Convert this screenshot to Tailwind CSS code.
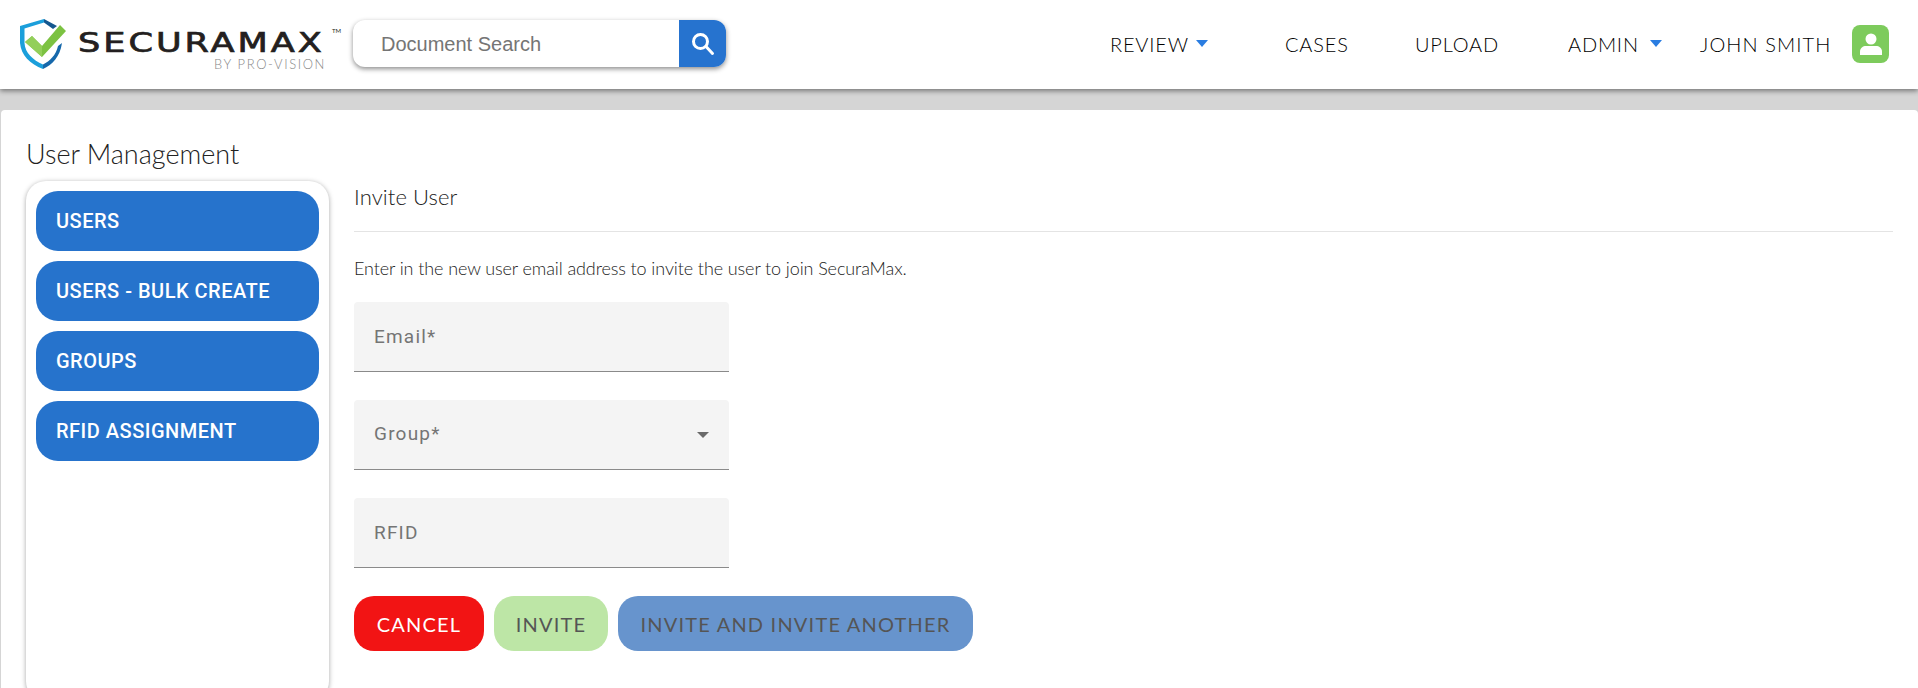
<!DOCTYPE html>
<html lang="en">
<head>
  <meta charset="UTF-8">
  <title>User Management - SecuraMax</title>
  <script src="https://cdn.jsdelivr.net/npm/@tailwindcss/browser@4"></script>
</head>
<body class="h-[688px] overflow-hidden bg-[#d5d5d5] font-['Lato',sans-serif] text-[#222]">
  <!-- Navigation -->
  <nav class="relative z-10 flex h-[89px] items-center bg-white pb-[2px] pl-[20px] pr-[29px] shadow-[0_2px_5px_rgba(0,0,0,0.45)]">
    <div class="flex h-[50px] w-[333px] shrink-0 items-center">
      <svg class="h-[50px] w-[46px] shrink-0" viewBox="0 0 46 50">
        <path d="M0 7 L24 0 L24 3.5 L4.5 9.5 L4.5 24 C5 34 13 41 23 45.5 L23 50 C10 45 1 36 0 24 Z" fill="#1b9fdb"/>
        <path d="M24 0 L37 7 L33 10 L24 3.5 Z" fill="#14578f"/>
        <path d="M23 50 C32 46 40 38 42 24 L38 27 C36 36 30 42 23 45.5 Z" fill="#1668ab"/>
        <path d="M5 23 L12 17 L22 27 L40 6 L46 12 L22 38 Z" fill="#7cc242"/>
        <path d="M22 27 L22 38 L5 23 L12 17 Z" fill="#93cf5a"/>
      </svg>
      <div class="relative ml-[12px] flex flex-col pt-[13px]">
        <div class="w-[178px] origin-left scale-x-135 whitespace-nowrap text-[26px] leading-[24px] tracking-[2.2px] text-[#231f20] [-webkit-text-stroke:0.7px_#231f20] font-['DejaVu_Sans',sans-serif]">SECURAMAX</div>
        <span class="absolute left-[254px] top-[9px] text-[6px] leading-[8px] text-[#231f20]">TM</span>
        <div class="mt-[3px] w-[248px] text-right text-[13px] leading-[12px] font-light tracking-[1.6px] text-[#888]">BY PRO-VISION</div>
      </div>
    </div>
    <div class="flex h-[47px] w-[373px] overflow-hidden rounded-[12px] bg-white shadow-[0_2px_5px_rgba(0,0,0,0.45)]">
      <input placeholder="Document Search" class="min-w-0 flex-1 pl-[28px] font-['Liberation_Sans',sans-serif] text-[20px] outline-none placeholder:text-[#757575]">
      <div class="flex w-[47px] items-center justify-center bg-[#2673cf]">
        <svg class="h-[24px] w-[24px]" viewBox="0 0 24 24" fill="none" stroke="white" stroke-width="3"><circle cx="9.5" cy="9.5" r="7"/><path d="M15 14.5 L21.5 21.5" stroke-linecap="round"/></svg>
      </div>
    </div>
    <div class="ml-auto flex items-center text-[20px] font-light tracking-[0.8px] text-black">
      <span class="w-[76px] whitespace-nowrap">REVIEW</span>
      <span class="ml-[10px] mr-[77px] h-0 w-0 border-x-[6.5px] border-t-[7px] border-x-transparent border-t-[#2a7de1]"></span>
      <span class="mr-[69px] w-[61px] whitespace-nowrap">CASES</span>
      <span class="mr-[69px] w-[84px] whitespace-nowrap">UPLOAD</span>
      <span class="w-[70px] whitespace-nowrap">ADMIN</span>
      <span class="ml-[12px] mr-[38px] h-0 w-0 border-x-[6.5px] border-t-[7px] border-x-transparent border-t-[#2a7de1]"></span>
      <span class="mr-[22px] w-[130px] whitespace-nowrap tracking-[1.1px]">JOHN SMITH</span>
      <div class="flex h-[38px] w-[37px] items-center justify-center rounded-[8px] bg-[#7dcb5c]">
        <svg class="h-[26px] w-[24px]" viewBox="0 0 24 26" fill="white"><circle cx="12" cy="8" r="5.5"/><path d="M1 24 V20.5 C1 17 4 15 7 15 H17 C20 15 23 17 23 20.5 V24 Z"/></svg>
      </div>
    </div>
  </nav>

  <!-- Page card -->
  <main class="ml-px mt-[21px] h-[600px] overflow-hidden rounded-t-[4px] bg-white px-[25px]">
    <h1 class="pt-[25px] text-[27px] leading-[38px] font-light text-[#222]">User Management</h1>
    <div class="mt-[8px] flex">
      <!-- Sidebar -->
      <aside class="flex h-[520px] w-[303px] shrink-0 flex-col gap-[10px] rounded-[20px] bg-white p-[10px] shadow-[0_1px_5px_rgba(0,0,0,0.35)]">
        <a class="flex h-[60px] items-center rounded-[22px] bg-[#2673cc] px-[20px] font-['Roboto',sans-serif] text-[20px] font-medium tracking-[0.5px] text-white">USERS</a>
        <a class="flex h-[60px] items-center rounded-[22px] bg-[#2673cc] px-[20px] font-['Roboto',sans-serif] text-[20px] font-medium tracking-[0.5px] text-white">USERS - BULK CREATE</a>
        <a class="flex h-[60px] items-center rounded-[22px] bg-[#2673cc] px-[20px] font-['Roboto',sans-serif] text-[20px] font-medium tracking-[0.5px] text-white">GROUPS</a>
        <a class="flex h-[60px] items-center rounded-[22px] bg-[#2673cc] px-[20px] font-['Roboto',sans-serif] text-[20px] font-medium tracking-[0.5px] text-white">RFID ASSIGNMENT</a>
      </aside>
      <!-- Invite form -->
      <section class="ml-[25px] flex-1">
        <h2 class="h-[51px] border-b border-[#e4e4e4] pt-[1px] text-[22px] leading-[30px] font-light tracking-[0.1px] text-[#222]">Invite User</h2>
        <p class="mt-[25px] text-[18px] leading-[22px] font-light tracking-[-0.1px] text-[#222]">Enter in the new user email address to invite the user to join SecuraMax.</p>
        <div class="mt-[23px] flex w-[375px] flex-col gap-[28px]">
          <input placeholder="Email*" class="h-[70px] rounded-t-[4px] border-b border-[#8a8a8a] bg-[#f4f4f4] px-[20px] font-['Roboto',sans-serif] text-[19px] tracking-[1.2px] outline-none placeholder:text-[#757575]">
          <div class="flex h-[70px] items-center justify-between rounded-t-[4px] border-b border-[#8a8a8a] bg-[#f4f4f4] px-[20px] font-['Roboto',sans-serif] text-[19px] tracking-[1.2px] text-[#757575]">
            <span>Group*</span>
            <span class="h-0 w-0 border-x-[6.5px] border-t-[6.5px] border-x-transparent border-t-[#6a6a6a]"></span>
          </div>
          <input placeholder="RFID" class="h-[70px] rounded-t-[4px] border-b border-[#8a8a8a] bg-[#f4f4f4] px-[20px] font-['Roboto',sans-serif] text-[19px] tracking-[1.2px] outline-none placeholder:text-[#757575]">
        </div>
        <div class="mt-[28px] flex gap-[10px] text-[20px] tracking-[1.2px]">
          <button class="h-[55px] w-[130px] rounded-[20px] bg-[#f21414] text-white">CANCEL</button>
          <button class="h-[55px] w-[114px] rounded-[20px] bg-[#bde6a6] text-[#555]">INVITE</button>
          <button class="h-[55px] w-[355px] rounded-[20px] bg-[#6794cd] text-[#555]">INVITE AND INVITE ANOTHER</button>
        </div>
      </section>
    </div>
  </main>
</body>
</html>
